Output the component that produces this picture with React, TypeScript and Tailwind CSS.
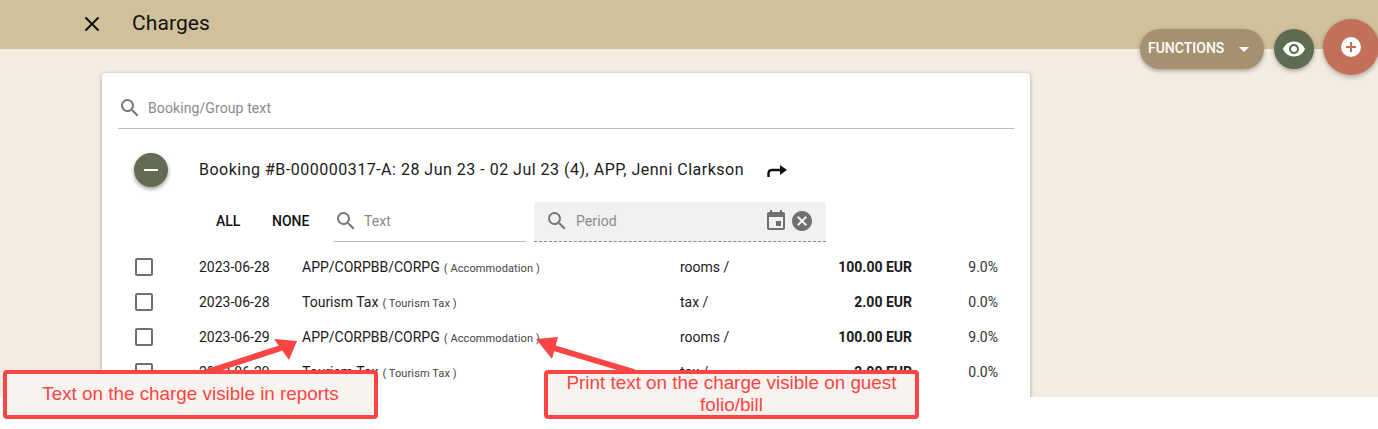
import * as React from "react";
import { X } from "lucide-react";

type Charge = {
  date: string;
  text: string;
  print: string;
  account: string;
  amount: string;
  vat: string;
};

const charges: Charge[] = [
  { date: "2023-06-28", text: "APP/CORPBB/CORPG", print: "Accommodation", account: "rooms /", amount: "100.00 EUR", vat: "9.0%" },
  { date: "2023-06-28", text: "Tourism Tax", print: "Tourism Tax", account: "tax /", amount: "2.00 EUR", vat: "0.0%" },
  { date: "2023-06-29", text: "APP/CORPBB/CORPG", print: "Accommodation", account: "rooms /", amount: "100.00 EUR", vat: "9.0%" },
  { date: "2023-06-29", text: "Tourism Tax", print: "Tourism Tax", account: "tax /", amount: "2.00 EUR", vat: "0.0%" },
];

function SearchIcon() {
  return (
    <svg viewBox="0 0 24 24" className="h-6 w-6 shrink-0" fill="#757575">
      <path d="M15.5 14h-.79l-.28-.27A6.471 6.471 0 0 0 16 9.5 6.5 6.5 0 1 0 9.5 16c1.61 0 3.09-.59 4.23-1.57l.27.28v.79l5 4.99L20.49 19l-4.99-5zm-6 0C7.01 14 5 11.99 5 9.5S7.01 5 9.5 5 14 7.01 14 9.5 11.99 14 9.5 14z" />
    </svg>
  );
}

function ChargeRow({ charge }: { charge: Charge }) {
  return (
    <div className="flex h-[35px] items-center text-sm text-[#1a1a1a]">
      <div className="ml-[17px] h-[18px] w-[18px] shrink-0 rounded-[2px] border-2 border-[#6f6f6f]" />
      <div className="ml-[46px] w-[103px] shrink-0">{charge.date}</div>
      <div className="w-[378px] shrink-0 whitespace-nowrap">
        {charge.text}
        <span className="ml-1 text-[11px] tracking-[0.1px] text-[#444]">( {charge.print} )</span>
      </div>
      <div className="w-[100px] shrink-0">{charge.account}</div>
      <div className="w-[132px] shrink-0 text-right font-bold">{charge.amount}</div>
      <div className="w-[86px] shrink-0 text-right text-[#333]">{charge.vat}</div>
    </div>
  );
}

function Callout({ className, children }: { className: string; children: React.ReactNode }) {
  return (
    <div
      className={`absolute top-[370px] flex h-[49px] w-[375px] items-center justify-center rounded-[4px] border-4 border-[#fb4444] bg-[#f8f3ef] px-4 pb-[1px] text-center font-['Liberation_Sans',sans-serif] text-[18.85px] leading-[22px] text-[#fb4444] ${className}`}
    >
      {children}
    </div>
  );
}

export default function App() {
  return (
    <div className="relative h-[429px] w-[1378px] overflow-hidden bg-white font-['Roboto',sans-serif]">
      <div className="h-[397px] overflow-hidden bg-[#f4ebe2]">
        <header className="flex h-[49px] items-center bg-[#d0c09c] pb-[2px]">
          <X className="ml-[80px] h-6 w-6 text-[#111]" strokeWidth={2} />
          <h1 className="ml-[28px] text-[21px] tracking-[0.1px] text-[#111]">Charges</h1>
        </header>

        <main className="ml-[102px] mt-6 h-[340px] w-[928px] rounded-t-[4px] bg-white px-4 shadow-[0_1px_4px_rgba(0,0,0,0.3)]">
          <div className="flex h-[56px] items-center gap-[6px] border-b border-[#bdbdbd] pt-[14px] text-sm tracking-[0.1px] text-[#8a8a8a]">
            <SearchIcon />
            <span>Booking/Group text</span>
          </div>

          <div className="mt-[24px] flex h-[34px] items-center">
            <div className="ml-4 flex h-[34px] w-[34px] items-center justify-center rounded-full bg-[#636b54] shadow-[0_2px_4px_rgba(0,0,0,0.4)]">
              <div className="h-[2px] w-[14px] bg-white" />
            </div>
            <div className="ml-[31px] whitespace-nowrap text-base tracking-[0.5px] text-[#1a1a1a]">
              Booking #B-000000317-A: 28 Jun 23 - 02 Jul 23 (4), APP, Jenni Clarkson
            </div>
            <svg viewBox="0 0 20 14" className="ml-[23px] mt-[2px] h-[14px] w-[20px]" fill="none">
              <path d="M1.5 13 V9.5 Q1.5 6 5 6 H14" stroke="#111" strokeWidth="2.4" />
              <path d="M13 1 L20 6 L13 11 Z" fill="#111" />
            </svg>
          </div>

          <div className="ml-[98px] mt-[15px] flex h-[40px] items-stretch">
            <div className="flex w-[118px] items-center pb-[2px] text-sm font-medium text-[#111]">
              <span className="w-[56px]">ALL</span>
              <span>NONE</span>
            </div>
            <div className="flex w-[192px] items-center gap-[6px] border-b border-[#bdbdbd] pb-[2px] text-sm tracking-[0.1px] text-[#8a8a8a]">
              <SearchIcon />
              <span>Text</span>
            </div>
            <div className="ml-2 flex w-[292px] items-center rounded-t-[4px] border-b border-dashed border-[#8a8a8a] bg-[#f1f1f1] pb-[2px] pl-[11px] pr-[12px] text-sm tracking-[0.1px] text-[#8a8a8a]">
              <SearchIcon />
              <span className="ml-[7px] flex-1">Period</span>
              <svg viewBox="0 0 24 24" className="h-6 w-6" fill="#6f6f6f">
                <path d="M17 12h-5v5h5v-5zM16 1v2H8V1H6v2H5c-1.11 0-1.99.9-1.99 2L3 19c0 1.1.89 2 2 2h14c1.1 0 2-.9 2-2V5c0-1.1-.9-2-2-2h-1V1h-2zm3 18H5V8h14v11z" />
              </svg>
              <svg viewBox="0 0 24 24" className="ml-[2px] h-6 w-6" fill="#6f6f6f">
                <path d="M12 2C6.47 2 2 6.47 2 12s4.47 10 10 10 10-4.47 10-10S17.53 2 12 2zm5 13.59L15.59 17 12 13.41 8.41 17 7 15.59 10.59 12 7 8.41 8.41 7 12 10.59 15.59 7 17 8.41 13.41 12 17 15.59z" />
              </svg>
            </div>
          </div>

          <div className="mt-[7px]">
            {charges.map((charge, i) => (
              <ChargeRow key={i} charge={charge} />
            ))}
          </div>
        </main>
      </div>

      {/* floating action buttons sit over the header edge */}
      <div className="absolute left-[1140px] top-[29px] flex h-[40px] w-[124px] items-center rounded-full bg-[#a5916f] pb-[2px] pl-2 text-sm font-medium text-white shadow-[0_2px_4px_rgba(0,0,0,0.3)]">
        <span>FUNCTIONS</span>
        <div className="ml-[15px] mt-[2px] h-0 w-0 border-x-[5px] border-t-[5px] border-x-transparent border-t-white" />
      </div>
      <div className="absolute left-[1274px] top-[29px] flex h-[40px] w-[40px] items-center justify-center rounded-full bg-[#5f6b52] shadow-[0_2px_4px_rgba(0,0,0,0.3)]">
        <svg viewBox="0 0 24 24" className="h-6 w-6" fill="#fff">
          <path d="M12 4.5C7 4.5 2.73 7.61 1 12c1.73 4.39 6 7.5 11 7.5s9.27-3.11 11-7.5c-1.73-4.39-6-7.5-11-7.5zM12 17c-2.76 0-5-2.24-5-5s2.24-5 5-5 5 2.24 5 5-2.24 5-5 5zm0-8c-1.66 0-3 1.34-3 3s1.34 3 3 3 3-1.34 3-3-1.34-3-3-3z" />
        </svg>
      </div>
      <div className="absolute left-[1323px] top-[19px] flex h-[56px] w-[56px] items-center justify-center rounded-full bg-[#c27058] shadow-[0_2px_5px_rgba(0,0,0,0.3)]">
        <svg viewBox="0 0 24 24" className="h-6 w-6">
          <circle cx="12" cy="12" r="10" fill="#fff" />
          <path d="M12 7v10M7 12h10" stroke="#c27058" strokeWidth="2" />
        </svg>
      </div>

      {/* annotation arrows pasted over the screenshot */}
      <svg className="absolute left-0 top-0 h-[429px] w-[1378px]" viewBox="0 0 1378 429" fill="#fb4444">
        <path d="M207 372 L281 348" stroke="#fb4444" strokeWidth="6" />
        <path d="M297 341 L274 339 L289 360 Z" />
        <path d="M634 372 L547 346" stroke="#fb4444" strokeWidth="6" />
        <path d="M536 339 L558 337 L552 359 Z" />
      </svg>

      <Callout className="left-[3px]">Text on the charge visible in reports</Callout>
      <Callout className="left-[544px]">Print text on the charge visible on guest folio/bill</Callout>
    </div>
  );
}
